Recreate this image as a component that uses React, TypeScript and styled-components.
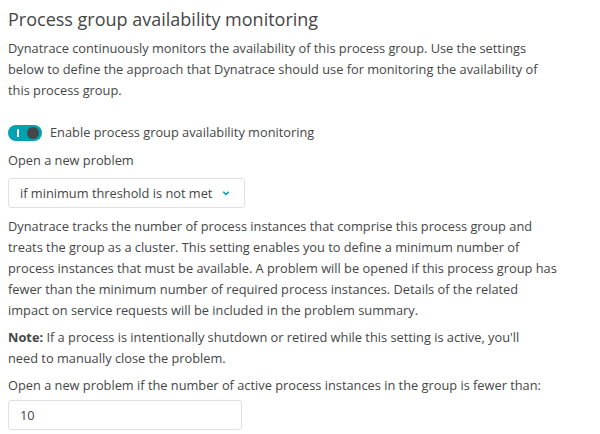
import styled, { createGlobalStyle } from "styled-components"

const Global = createGlobalStyle`
    body {
        margin: 0;
        background: #fff;
        font-family: "Open Sans", "Noto Sans", sans-serif;
        color: #454646;
    }
`

const Page = styled.div`
    padding: 7px 8px 0 8px;
    width: 584px;
    font-size: 12.8px;
    line-height: 21px;
`
const Title = styled.h2`
    font-size: 18px;
    font-weight: 400;
    line-height: 24px;
    margin: 0 0 7px;
    color: #454646;
`
const Text = styled.p<{ $gap?: number }>`
    margin: 0 0 ${p => p.$gap ?? 6}px;
    white-space: nowrap;
`
const ToggleRow = styled.label`
    display: flex;
    align-items: center;
    gap: 8px;
    margin: 21px 0 7px;
`
const Track = styled.span`
    position: relative;
    width: 34px;
    height: 16px;
    border-radius: 8px;
    background: #00a1b2;
    display: inline-block;
    flex: none;
`
const Bar = styled.span`
    position: absolute;
    left: 9px;
    top: 4px;
    width: 2px;
    height: 8px;
    background: #fff;
`
const Knob = styled.span`
    position: absolute;
    right: 3px;
    top: 2px;
    width: 12px;
    height: 12px;
    border-radius: 50%;
    background: #454646;
`
const Label = styled.div<{ $gap?: number }>`
    margin-bottom: ${p => p.$gap ?? 7}px;
`
const Field = styled.div<{ $width: number }>`
    box-sizing: border-box;
    width: ${p => p.$width}px;
    height: 30px;
    border: 1px solid #e0e0e0;
    border-radius: 3px;
    display: flex;
    align-items: center;
    justify-content: space-between;
    padding: 0 13px 0 11px;
    background: #fff;
    margin-bottom: 8px;
`
const Chevron = styled.svg`
    width: 10px;
    height: 10px;
`

export default function App() {
    return (
        <Page>
            <Global />
            <Title>Process group availability monitoring</Title>
            <Text $gap={0}>
                Dynatrace continuously monitors the availability of this process group. Use the settings<br />
                below to define the approach that Dynatrace should use for monitoring the availability of<br />
                this process group.
            </Text>
            <ToggleRow>
                <Track><Bar /><Knob /></Track>
                Enable process group availability monitoring
            </ToggleRow>
            <Label>Open a new problem</Label>
            <Field $width={237}>
                if minimum threshold is not met
                <Chevron viewBox="0 0 10 10">
                    <path d="M2.2 3.8 L5 6.4 L7.8 3.8" fill="none" stroke="#00a1b2" strokeWidth="1.5" />
                </Chevron>
            </Field>
            <Text>
                Dynatrace tracks the number of process instances that comprise this process group and<br />
                treats the group as a cluster. This setting enables you to define a minimum number of<br />
                process instances that must be available. A problem will be opened if this process group has<br />
                fewer than the minimum number of required process instances. Details of the related<br />
                impact on service requests will be included in the problem summary.
            </Text>
            <Text>
                <b>Note:</b> If a process is intentionally shutdown or retired while this setting is active, you'll<br />
                need to manually close the problem.
            </Text>
            <Label $gap={4}>Open a new problem if the number of active process instances in the group is fewer than:</Label>
            <Field $width={234}>10</Field>
        </Page>
    )
}
